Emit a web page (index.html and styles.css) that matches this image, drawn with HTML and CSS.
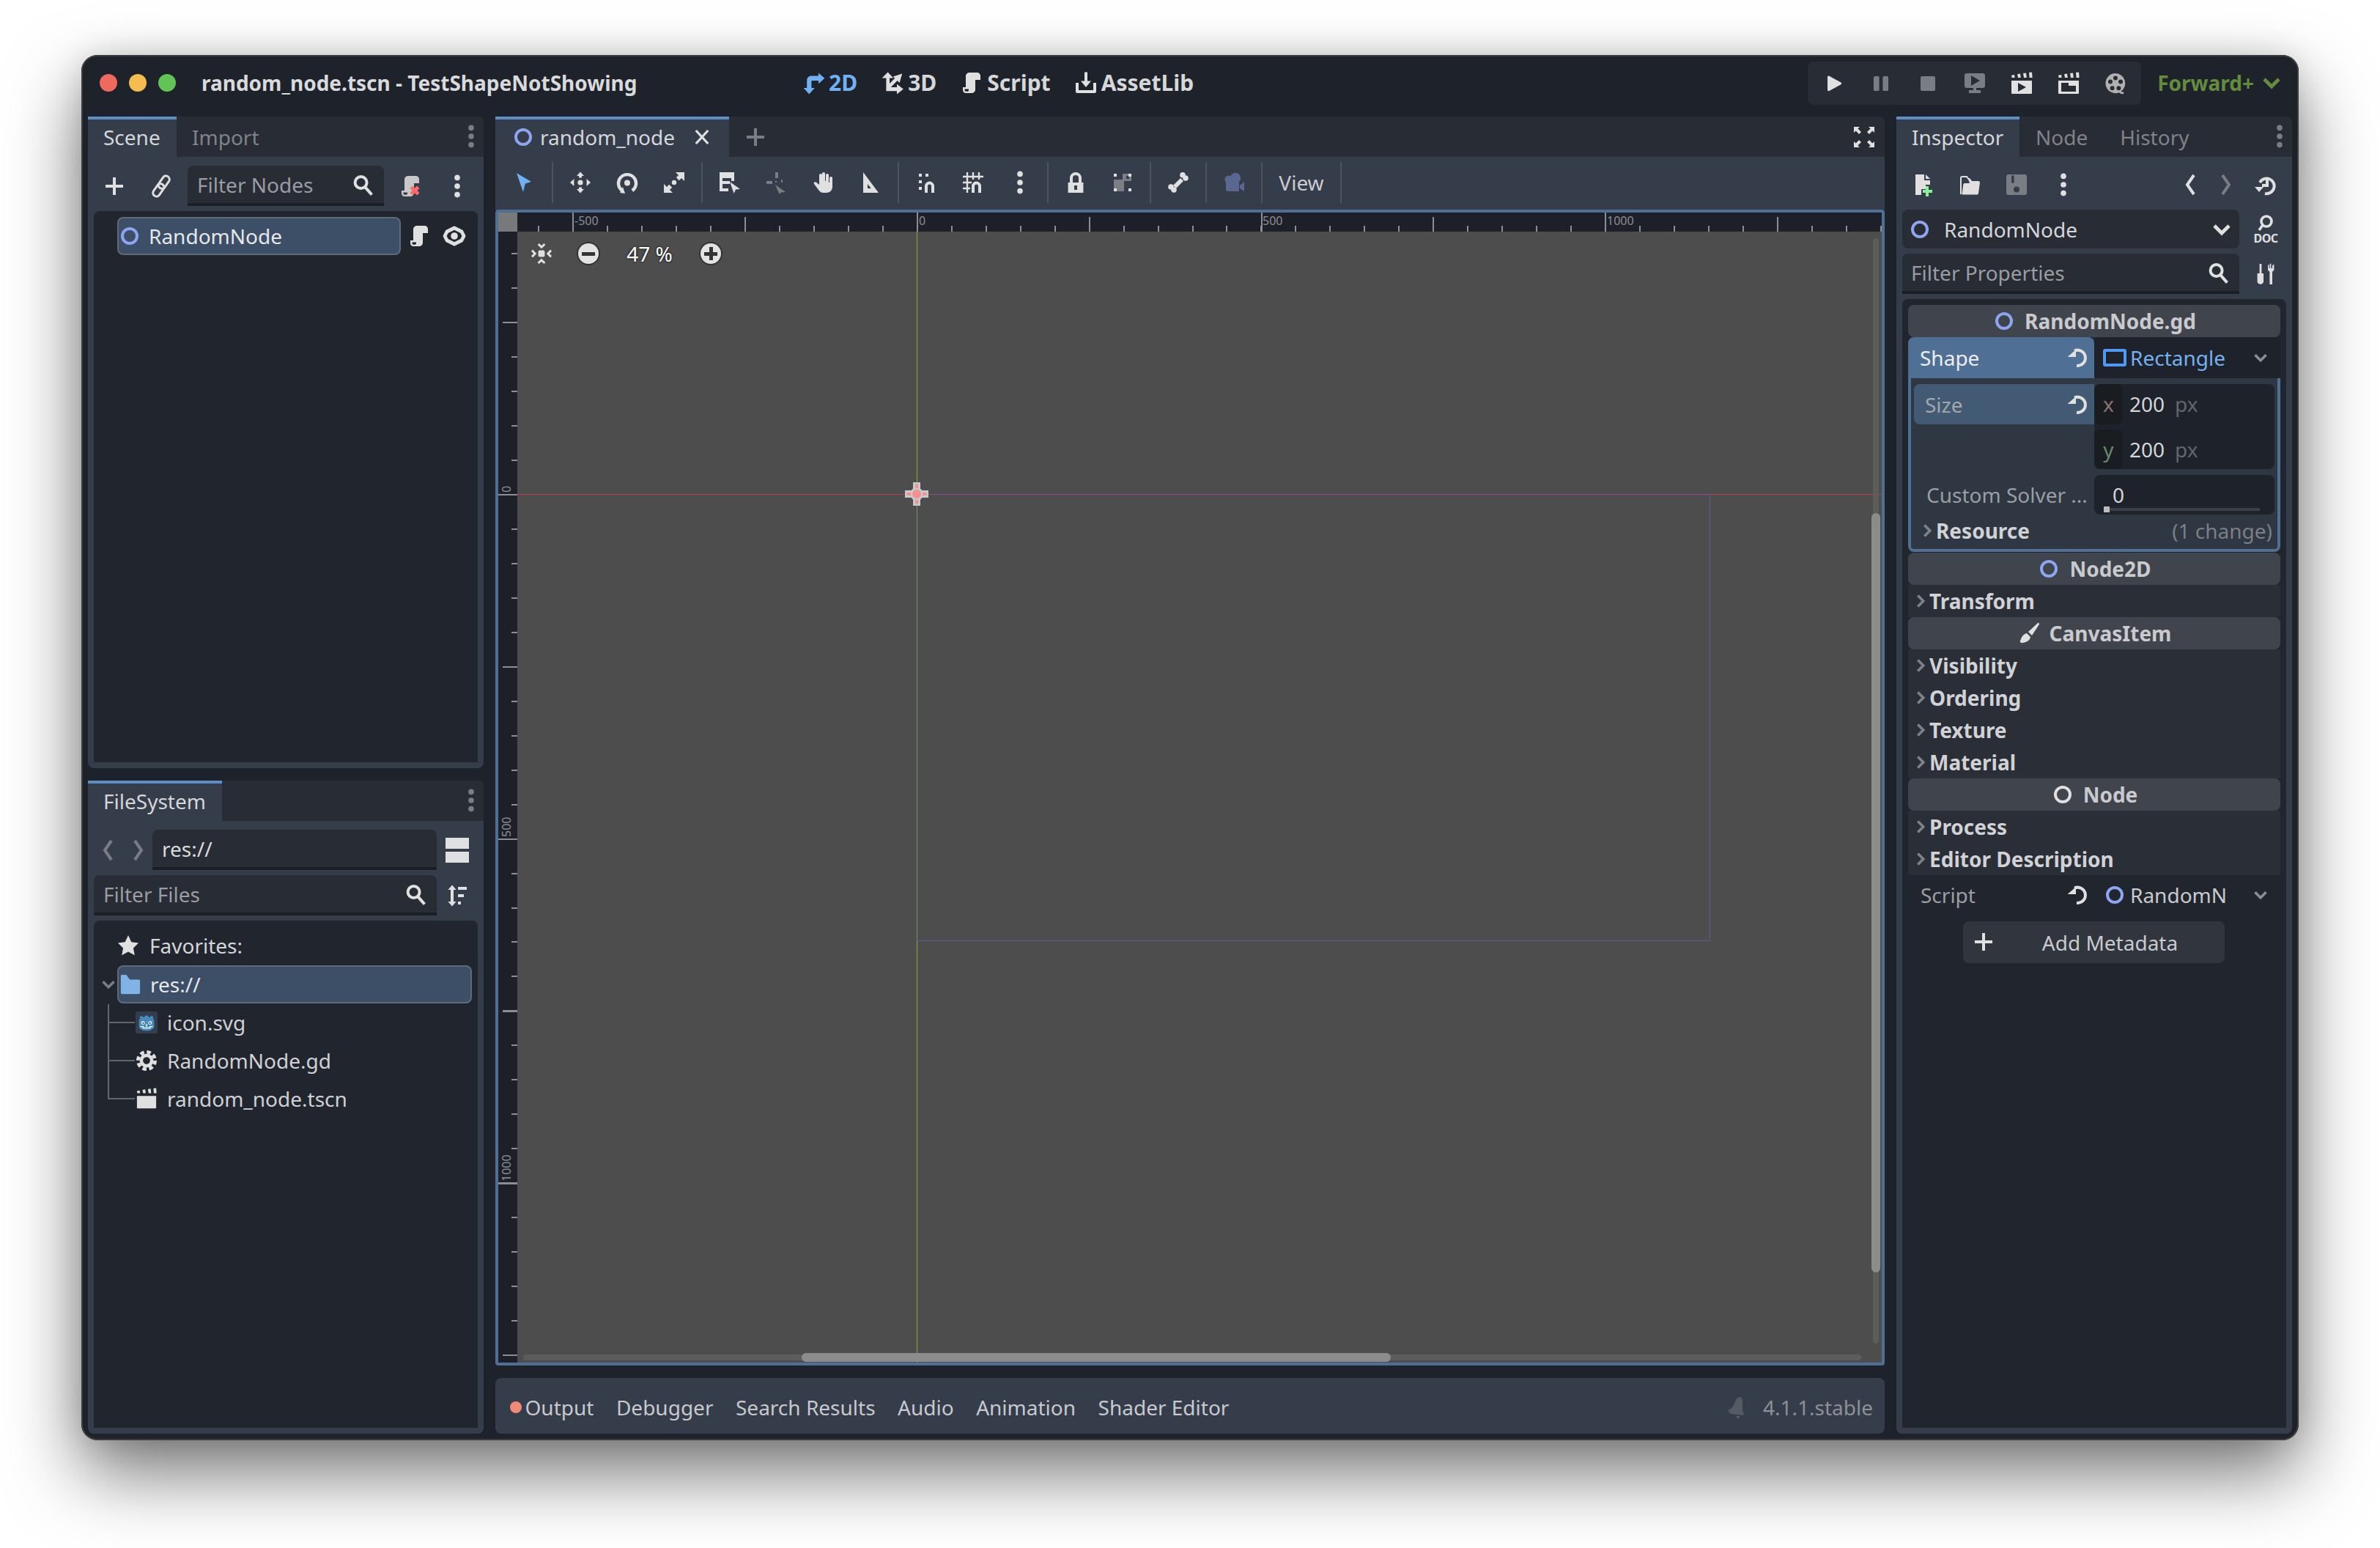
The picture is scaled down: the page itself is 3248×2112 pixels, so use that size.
FILE: index.html
```html
<!DOCTYPE html>
<html lang="en">
<head>
<meta charset="utf-8">
<title>random_node.tscn - TestShapeNotShowing</title>
<link rel="stylesheet" href="styles.css">
</head>
<body>
<svg class="defs" aria-hidden="true">
  <symbol id="i-plus" viewBox="0 0 16 16"><path fill="currentColor" d="M7 2h2v5h5v2H9v5H7V9H2V7h5z"/></symbol>
  <symbol id="i-ring" viewBox="0 0 16 16"><circle cx="8" cy="8" r="5" fill="none" stroke="currentColor" stroke-width="2"/></symbol>
  <symbol id="i-kebab" viewBox="0 0 16 16"><g fill="currentColor"><circle cx="8" cy="2.2" r="1.9"/><circle cx="8" cy="8" r="1.9"/><circle cx="8" cy="13.8" r="1.9"/></g></symbol>
  <symbol id="i-search" viewBox="0 0 16 16"><g fill="none" stroke="currentColor" stroke-width="2"><circle cx="6.8" cy="6.5" r="4"/><path d="M9.6 9.6l4.6 5.2"/></g></symbol>
  <symbol id="i-link" viewBox="0 0 16 16"><g transform="rotate(-55 8 8)" fill="none" stroke="currentColor" stroke-width="1.5"><rect x="0" y="5.6" width="9.5" height="4.8" rx="2.4"/><rect x="6.5" y="5.6" width="9.5" height="4.8" rx="2.4"/></g></symbol>
  <symbol id="i-script" viewBox="0 0 16 16"><path fill="currentColor" d="M6.5 1C5 1 4 2.2 4 3.5V11H2v2c0 1.1.9 2 2 2h4c1.5 0 2.5-1.1 2.5-2.5V6H14V3.2C14 2 13 1 11.8 1zM3.2 12.2H6V13c0 .5-.4.9-.9.9H4.200c-.6 0-1-.4-1-1z"/></symbol>
  <symbol id="i-eye" viewBox="0 0 16 16"><path fill="none" stroke="currentColor" stroke-width="2.400" d="M8 2.500L13 5 14.500 8 13 11 8 13.500 3 11 1.500 8 3 5z" stroke-linejoin="round"/><circle cx="8" cy="8" r="2.400" fill="currentColor"/></symbol>
  <symbol id="i-arrow" viewBox="0 0 16 16"><path fill="currentColor" d="M2.500 1.500l10 6-4.100 1.300L7 14.500z"/></symbol>
  <symbol id="i-move" viewBox="0 0 16 16"><g fill="currentColor"><circle cx="8" cy="8" r="1.800"/><path d="M8 0.800l2.500 2.700H9v1.300H7V3.500H5.500zM8 15.200l2.500-2.700H9v-1.300H7v1.300H5.500zM1 8l2.700-2.500V7h0v2h0v1.500zM15 8l-2.700-2.500V7h0v2h0v1.500z"/></g></symbol>
  <symbol id="i-rotate" viewBox="0 0 16 16"><path fill="none" stroke="currentColor" stroke-width="2.200" d="M4.600 13.500A6 6 0 1 1 11.400 13.500"/><circle cx="8" cy="8.300" r="2" fill="currentColor"/><path fill="currentColor" d="M3 15l3.500.5L5 11z"/></symbol>
  <symbol id="i-scale" viewBox="0 0 16 16"><g fill="currentColor"><path d="M9 1h6v6l-2-2-1.600 1.600L9.400 4.600 11 3z"/><path d="M7 15H1V9l2 2 1.600-1.600 2 2L5 13z"/><circle cx="8" cy="8" r="1.600"/></g></symbol>
  <symbol id="i-listsel" viewBox="0 0 16 16"><path fill="currentColor" d="M1 1h10v6H9V5H3v2h5v2H3v3h4v2H1zM3 3h6V3H3z"/><path fill="currentColor" d="M8 7.500l7 5-3 .3-1.200 2.700z"/></symbol>
  <symbol id="i-pivot" viewBox="0 0 16 16"><path fill="currentColor" d="M7 1h2v4H7zM1 7h4v2H1zM7 9.500l7 5-3 .3-1.200 1.200z"/><path fill="currentColor" d="M7 7h1v1H7zM11 6h1v2h-1z"/></symbol>
  <symbol id="i-hand" viewBox="0 0 16 16"><path fill="currentColor" d="M8 1c.6 0 1 .4 1 1v5h.5V3c0-.6.4-1 1-1s1 .4 1 1v5h.5V5c0-.6.4-1 1-1s1 .4 1 1v6c0 2.200-1.800 4-4 4H8c-1.500 0-2.500-.7-3.300-1.800L1.500 9c-.4-.6 0-1.400.8-1.400.4 0 .7.2 1 .5L5 9.500V3c0-.6.4-1 1-1s1 .4 1 1V2c0-.6.4-1 1-1z"/></symbol>
  <symbol id="i-ruler" viewBox="0 0 16 16"><path fill="currentColor" fill-rule="evenodd" d="M3 1l10.500 14H3zM6 9v3h2.400z"/></symbol>
  <symbol id="i-snap" viewBox="0 0 16 16"><path fill="currentColor" d="M3 2h2v2H3zM7.500 2h2v2h-2zM3 6.500h2v2H3zM3 11h2v2H3z"/><path fill="none" stroke="currentColor" stroke-width="2" d="M8 15v-4.500a2.200 2.200 0 0 1 4.500 0V15"/></symbol>
  <symbol id="i-grid" viewBox="0 0 16 16"><path fill="none" stroke="currentColor" stroke-width="1.200" d="M4 1v14M8 1v5M12 1v5M1 4h14M1 8h6M1 12h5"/><path fill="none" stroke="currentColor" stroke-width="2" d="M8 15v-4.500a2.200 2.200 0 0 1 4.500 0V15"/></symbol>
  <symbol id="i-lock" viewBox="0 0 16 16"><path fill="currentColor" fill-rule="evenodd" d="M8 1a4 4 0 0 0-4 4v3H2.800v7h10.400V8H12V5a4 4 0 0 0-4-4zm0 2a2 2 0 0 1 2 2v3H6V5a2 2 0 0 1 2-2zM7 10h2v3H7z"/></symbol>
  <symbol id="i-group" viewBox="0 0 16 16"><path fill="#7b7e85" d="M2 6h6V2h6v5H9v7H2z"/><path fill="#363d4a" d="M10.500 3.500h2v2h-2z"/><path fill="#e0e0e0" d="M2 2h2v2H2zM12 2h2v2h-2zM2 12h2v2H2zM12 12h2v2h-2z"/></symbol>
  <symbol id="i-bone" viewBox="0 0 16 16"><g fill="currentColor"><path d="M9.500 5l2 2-5 5-2-2z"/><circle cx="11" cy="2.900" r="1.900"/><circle cx="13" cy="5" r="1.900"/><circle cx="3" cy="11" r="1.900"/><circle cx="5" cy="13" r="1.900"/></g></symbol>
  <symbol id="i-camera" viewBox="0 0 16 16"><g fill="currentColor"><circle cx="4.500" cy="6" r="2.800"/><circle cx="9" cy="5" r="3.600"/><path d="M2.500 8h9v6h-8a1 1 0 0 1-1-1zM12 10l3-2.500V14l-3-2z"/></g></symbol>
  <symbol id="i-play" viewBox="0 0 16 16"><path fill="currentColor" d="M3.500 3.600c0-.6.7-1 1.200-.7l8 4.400c.5.300.5 1 0 1.300l-8 4.400c-.5.300-1.200-.1-1.200-.7z"/></symbol>
  <symbol id="i-pause" viewBox="0 0 16 16"><g fill="currentColor"><rect x="3" y="3" width="3.800" height="10" rx=".8"/><rect x="9.200" y="3" width="3.800" height="10" rx=".8"/></g></symbol>
  <symbol id="i-stop" viewBox="0 0 16 16"><rect x="3" y="3" width="10" height="10" rx="1" fill="currentColor"/></symbol>
  <symbol id="i-remote" viewBox="0 0 16 16"><path fill="currentColor" fill-rule="evenodd" d="M2.500 1h11A1.500 1.500 0 0 1 15 2.500v7a1.500 1.500 0 0 1-1.500 1.500H9v1.500h3V14.500H4V12.500h3V11H2.500A1.500 1.500 0 0 1 1 9.500v-7A1.500 1.500 0 0 1 2.500 1zM5.500 2.500v7l6-3.500z"/></symbol>
  <symbol id="i-clap" viewBox="0 0 16 16"><path fill="currentColor" d="M1 2.400l2 -.4.300 2H1.300zM5 1.600l2-.4.400 2.800H5.500zM9 1l2-.3.400 3.300H9.500zM13 .5l2-.3.300 3.800h-2z"/><path fill="currentColor" fill-rule="evenodd" d="M1 6h14v8.500a.5.500 0 0 1-.5.500h-13a.5.500 0 0 1-.5-.5z"/></symbol>
  <symbol id="i-clapplay" viewBox="0 0 16 16"><path fill="currentColor" d="M1 2.400l2-.4.300 2H1.300zM5 1.600l2-.4.400 2.800H5.500zM9 1l2-.3.400 3.300H9.500zM13 .5l2-.3.300 3.800h-2z"/><path fill="currentColor" fill-rule="evenodd" d="M1 6h14v8.500a.5.500 0 0 1-.5.500h-13a.5.500 0 0 1-.5-.5zM5.500 7.500v6l5.500-3z"/></symbol>
  <symbol id="i-clapfolder" viewBox="0 0 16 16"><path fill="currentColor" d="M1 2.400l2-.4.300 2H1.300zM5 1.600l2-.4.400 2.800H5.500zM9 1l2-.3.400 3.300H9.500zM13 .5l2-.3.300 3.800h-2z"/><path fill="currentColor" fill-rule="evenodd" d="M1 6h14v8.500a.5.500 0 0 1-.5.500h-13a.5.500 0 0 1-.5-.5zM3 7.500v6h10V9.500H8v-2z"/></symbol>
  <symbol id="i-film" viewBox="0 0 16 16"><path fill="currentColor" fill-rule="evenodd" d="M8 1a6.800 6.800 0 1 0 2.600 13.100c.6.700 1.400 1 2.400 1h.6v-1.300H13c-.5 0-.9-.1-1.200-.5A6.800 6.800 0 0 0 8 1zm0 1.800a1.500 1.500 0 1 1 0 3 1.500 1.500 0 0 1 0-3zM4.500 5.300a1.500 1.500 0 1 1 0 3 1.500 1.500 0 0 1 0-3zm7 0a1.500 1.500 0 1 1 0 3 1.500 1.500 0 0 1 0-3zM5.800 9.600a1.500 1.500 0 1 1 0 3 1.500 1.500 0 0 1 0-3zm4.400 0a1.500 1.500 0 1 1 0 3 1.500 1.500 0 0 1 0-3z"/></symbol>
  <symbol id="i-newres" viewBox="0 0 16 16"><path fill="currentColor" d="M3 1h6v4h4v3h-3v3H7v4H3z"/><path fill="currentColor" d="M10 1l3 3h-3z"/><path fill="#8eef97" d="M10 9h2v2.500h2.500v2H12V16h-2v-2.500H8v-2h2z"/></symbol>
  <symbol id="i-open" viewBox="0 0 16 16"><path fill="none" stroke="currentColor" stroke-width="1" d="M2 14.500V3.500c0-.6.400-1 1-1h3l1.500 2"/><path fill="currentColor" d="M3.800 14.800c-.7 0-1 0-1-.5l.8-6.300c.1-.6.500-1 1-1H8l-1-3 1-.5 1.500 2H14c.6 0 1 .5 1 1l-1 7.200c-.1.500-.4 1.100-1 1.100z"/></symbol>
  <symbol id="i-save" viewBox="0 0 16 16"><path fill="currentColor" fill-rule="evenodd" d="M2.500 1h11A1.500 1.500 0 0 1 15 2.500v11a1.500 1.500 0 0 1-1.500 1.500h-11A1.500 1.500 0 0 1 1 13.500v-11A1.500 1.500 0 0 1 2.500 1zM4.500 1.800v5h1.800v-5zM8 9.200a2 2 0 1 0 0 4 2 2 0 0 0 0-4z"/></symbol>
  <symbol id="i-back" viewBox="0 0 16 16"><path fill="none" stroke="currentColor" stroke-width="2" d="M10 1.500L5.500 8l4.500 6.500"/></symbol>
  <symbol id="i-fwd" viewBox="0 0 16 16"><path fill="none" stroke="currentColor" stroke-width="2" d="M6 1.500L10.500 8 6 14.500"/></symbol>
  <symbol id="i-hist" viewBox="0 0 16 16"><path fill="none" stroke="currentColor" stroke-width="2" d="M4 6.500A5.200 5.200 0 1 1 7.500 14M9 4.500V8.500H5.500"/><path fill="currentColor" d="M0.500 9.500h6l-3 3.500z"/></symbol>
  <symbol id="i-tools" viewBox="0 0 16 16"><path fill="currentColor" d="M3.800 1h1.400v6.500h1.300v6A2.500 2.500 0 0 1 4.500 15a2.500 2.500 0 0 1-2.200-1.500v-6h1.500zM9.500 1.300v3.200c0 1 .5 1.500 1.200 1.800V15h1.800V6.300c.8-.3 1.200-.9 1.200-1.800V1.300l-1.200.8V4h-.8V.9h-.9V4h-.5V2.100z"/></symbol>
  <symbol id="i-reset" viewBox="0 0 16 16"><path fill="none" stroke="currentColor" stroke-width="2" d="M5.500 3.300A5.300 5.300 0 1 1 7 13.400"/><path fill="currentColor" d="M.800 7.500h5.700V2.500z"/></symbol>
  <symbol id="i-chev" viewBox="0 0 16 16"><path fill="none" stroke="currentColor" stroke-width="2.400" d="M3 5.500l5 5 5-5"/></symbol>
  <symbol id="i-chevr" viewBox="0 0 16 16"><path fill="none" stroke="currentColor" stroke-width="2.400" d="M5.500 3l5 5-5 5"/></symbol>
  <symbol id="i-rect" viewBox="0 0 16 16"><rect x="1" y="3" width="14" height="10" rx=".5" fill="none" stroke="currentColor" stroke-width="2"/></symbol>
  <symbol id="i-star" viewBox="0 0 16 16"><path fill="currentColor" d="M8 .5l2.300 5 5.200.6-3.800 3.700 1 5.300L8 12.500l-4.700 2.600 1-5.300L.5 6.100l5.200-.6z"/></symbol>
  <symbol id="i-folder" viewBox="0 0 16 16"><path fill="currentColor" d="M1 2c0-.6.400-1 1-1h3l2.500 3.500H14c.6 0 1 .4 1 1V14c0 .6-.4 1-1 1H2c-.6 0-1-.4-1-1z"/></symbol>
  <symbol id="i-gear" viewBox="0 0 16 16"><circle cx="8" cy="8" r="6.200" fill="none" stroke="currentColor" stroke-width="2.600" stroke-dasharray="2.900 1.970"/><circle cx="8" cy="8" r="3.800" fill="none" stroke="currentColor" stroke-width="2.400"/></symbol>
  <symbol id="i-godot" viewBox="0 0 16 16"><rect width="16" height="16" rx="1.500" fill="#343e50"/><path fill="#478cbf" d="M4.500 3l1 1h1l.5-1h2l.5 1h1l1-1 1.500 1-.3 1.500.8.700V11c0 1.500-2.500 3-5.500 3S2.500 12.500 2.500 11V6.200l.8-.7L3 4z"/><circle cx="5.400" cy="8.300" r="1.300" fill="#fff"/><circle cx="10.600" cy="8.300" r="1.300" fill="#fff"/><circle cx="5.500" cy="8.400" r=".6" fill="#333"/><circle cx="10.500" cy="8.400" r=".6" fill="#333"/><path fill="none" stroke="#fff" stroke-width=".7" d="M3.500 11h2v1h5v-1h2M8 9v2"/></symbol>
  <symbol id="i-sort" viewBox="0 0 16 16"><path fill="currentColor" d="M5 .8L7.800 4H6v8h1.800L5 15.200 2.200 12H4V4H2.200zM9 2h6v2H9zM9 7h4v2H9zM9 12h2v2H9z"/></symbol>
  <symbol id="i-fs" viewBox="0 0 16 16"><path fill="currentColor" d="M1 1h4L3.700 2.300 6 4.500 4.500 6 2.300 3.700 1 5zM15 1v4l-1.300-1.300L11.500 6 10 4.500l2.300-2.200L11 1zM1 15v-4l1.300 1.300L4.500 10 6 11.500l-2.300 2.200L5 15zM15 15h-4l1.300-1.300L10 11.500l1.500-1.500 2.200 2.300L15 11z"/></symbol>
  <symbol id="i-2d" viewBox="0 0 16 16"><path fill="currentColor" d="M3.600 11.500V6.300C3.600 4.500 4.900 3.300 6.500 3.300h5V1.200l4.200 3.700-4.200 3.700V6.500H7.200c-.3 0-.5.2-.5.500v4.500h2.200L5.100 15.700 1.300 11.500z"/></symbol>
  <symbol id="i-3d" viewBox="0 0 16 16"><g fill="currentColor"><path d="M.8 4.800L4.800.8l3.800 4H6v3.700l3.600-3.600L8.400 3.700l6.200-2-1.800 6.300-1.500-1.500L6.900 11h4.100V8.900l4.400 3.400-4.400 3.500v-2.200H3.700V4.800z"/></g></symbol>
  <symbol id="i-asset" viewBox="0 0 16 16"><path fill="currentColor" d="M7 .8h2v6h2.500L8 11 4.500 6.800H7zM1 8h2v5h10V8h2v6c0 .6-.4 1-1 1H2c-.6 0-1-.4-1-1z"/></symbol>
  <symbol id="i-bell" viewBox="0 0 16 16"><path fill="currentColor" d="M9.500 1c1.500 0 2 1.500 2 3v6l1 3.500-9-1L1.500 10.500 5 7.500C6 6 7 1 9.500 1zM7 14h3l-1 1.500H8z"/></symbol>
  <symbol id="i-focus" viewBox="0 0 16 16"><g fill="currentColor"><rect x="5.800" y="5.800" width="4.400" height="4.400" rx="1"/></g><path fill="none" stroke="currentColor" stroke-width="1.500" d="M5.800 1.500L8 3.600l2.200-2.100M5.800 14.500L8 12.400l2.200 2.100M1.500 5.800L3.600 8l-2.100 2.200M14.500 5.800L12.400 8l2.100 2.200"/></symbol>
</svg>

<main class="window">
  <header class="titlebar">
    <div class="title-left">
      <span class="light red"></span><span class="light amber"></span><span class="light green"></span>
      <span class="title-text">random_node.tscn - TestShapeNotShowing</span>
    </div>
    <nav class="menu">
      <span class="menu-item active"><svg class="ic"><use href="#i-2d"/></svg>2D</span>
      <span class="menu-item"><svg class="ic"><use href="#i-3d"/></svg>3D</span>
      <span class="menu-item"><svg class="ic"><use href="#i-script"/></svg>Script</span>
      <span class="menu-item"><svg class="ic"><use href="#i-asset"/></svg>AssetLib</span>
    </nav>
    <div class="title-right">
      <div class="runbar">
        <span class="btn"><svg class="ic"><use href="#i-play"/></svg></span>
        <span class="btn dim"><svg class="ic"><use href="#i-pause"/></svg></span>
        <span class="btn dim"><svg class="ic"><use href="#i-stop"/></svg></span>
        <span class="btn dim"><svg class="ic"><use href="#i-remote"/></svg></span>
        <span class="btn"><svg class="ic"><use href="#i-clapplay"/></svg></span>
        <span class="btn"><svg class="ic"><use href="#i-clapfolder"/></svg></span>
        <span class="btn film"><svg class="ic"><use href="#i-film"/></svg></span>
      </div>
      <div class="renderer"><span>Forward+</span><svg class="ic"><use href="#i-chev"/></svg></div>
    </div>
  </header>

  <section class="left-col">
    <div class="dock scene-dock">
      <div class="tabs">
        <span class="tab active scene-tab">Scene</span>
        <span class="tab">Import</span>
        <svg class="ic kebab-tab"><use href="#i-kebab"/></svg>
      </div>
      <div class="dock-tools">
        <span class="btn"><svg class="ic"><use href="#i-plus"/></svg></span>
        <span class="btn"><svg class="ic"><use href="#i-link"/></svg></span>
        <div class="field filter-nodes"><span class="placeholder">Filter Nodes</span><svg class="ic"><use href="#i-search"/></svg></div>
        <span class="btn btn-after"><svg class="ic script-x"><use href="#i-script"/></svg><svg class="mini-x" viewBox="0 0 10 10"><path d="M2 2l6 6M8 2l-6 6"/></svg></span>
        <span class="btn"><svg class="ic"><use href="#i-kebab"/></svg></span>
      </div>
      <div class="tree scene-tree">
        <div class="scene-row">
          <div class="sel-row node-row"><svg class="ic node-ic"><use href="#i-ring"/></svg><span>RandomNode</span></div>
          <svg class="ic script-ic"><use href="#i-script"/></svg>
          <svg class="ic eye-ic"><use href="#i-eye"/></svg>
        </div>
      </div>
    </div>

    <div class="dock fs-dock">
      <div class="tabs">
        <span class="tab active fs-tab">FileSystem</span>
        <svg class="ic kebab-tab"><use href="#i-kebab"/></svg>
      </div>
      <div class="fs-tools">
        <div class="fs-line">
          <span class="btn nav dim"><svg class="ic"><use href="#i-back"/></svg></span>
          <span class="btn nav dim"><svg class="ic"><use href="#i-fwd"/></svg></span>
          <div class="field path-field"><span>res://</span></div>
          <span class="layout-btn"><i></i><i></i></span>
        </div>
        <div class="fs-line">
          <div class="field filter-files"><span class="placeholder">Filter Files</span><svg class="ic"><use href="#i-search"/></svg></div>
          <span class="side-btn"><svg class="ic"><use href="#i-sort"/></svg></span>
        </div>
      </div>
      <div class="tree fs-tree">
        <div class="fs-row fav"><svg class="ic"><use href="#i-star"/></svg><span>Favorites:</span></div>
        <div class="res-wrap">
          <svg class="ic tree-chev"><use href="#i-chev"/></svg>
          <div class="sel-row res-row"><svg class="ic folder-ic"><use href="#i-folder"/></svg><span>res://</span></div>
        </div>
        <div class="files">
          <div class="fs-row file"><svg class="ic"><use href="#i-godot"/></svg><span>icon.svg</span></div>
          <div class="fs-row file"><svg class="ic"><use href="#i-gear"/></svg><span>RandomNode.gd</span></div>
          <div class="fs-row file"><svg class="ic"><use href="#i-clap"/></svg><span>random_node.tscn</span></div>
        </div>
      </div>
    </div>
  </section>

  <section class="center-col">
    <div class="center-top">
      <div class="tabs center-tabs">
        <span class="tab active doc-tab"><svg class="ic node-ic"><use href="#i-ring"/></svg><span>random_node</span><svg class="close" viewBox="0 0 16 16"><path d="M2.500 2l11 12M13.500 2l-11 12"/></svg></span>
        <svg class="ic new-tab"><use href="#i-plus"/></svg>
        <svg class="ic fullscreen"><use href="#i-fs"/></svg>
      </div>
      <div class="canvas-toolbar">
        <span class="btn blue"><svg class="ic"><use href="#i-arrow"/></svg></span><i class="vsep"></i>
        <span class="btn"><svg class="ic"><use href="#i-move"/></svg></span>
        <span class="btn"><svg class="ic"><use href="#i-rotate"/></svg></span>
        <span class="btn"><svg class="ic"><use href="#i-scale"/></svg></span><i class="vsep"></i>
        <span class="btn"><svg class="ic"><use href="#i-listsel"/></svg></span>
        <span class="btn dim"><svg class="ic"><use href="#i-pivot"/></svg></span>
        <span class="btn"><svg class="ic"><use href="#i-hand"/></svg></span>
        <span class="btn"><svg class="ic"><use href="#i-ruler"/></svg></span><i class="vsep"></i>
        <span class="btn"><svg class="ic"><use href="#i-snap"/></svg></span>
        <span class="btn"><svg class="ic"><use href="#i-grid"/></svg></span>
        <span class="btn"><svg class="ic"><use href="#i-kebab"/></svg></span><i class="vsep"></i>
        <span class="btn"><svg class="ic"><use href="#i-lock"/></svg></span>
        <span class="btn"><svg class="ic"><use href="#i-group"/></svg></span><i class="vsep"></i>
        <span class="btn"><svg class="ic"><use href="#i-bone"/></svg></span><i class="vsep"></i>
        <span class="btn cam"><svg class="ic"><use href="#i-camera"/></svg></span><i class="vsep"></i>
        <span class="view-btn">View</span><i class="vsep"></i>
      </div>
    </div>

    <div class="viewport">
      <div class="corner"></div>
      <div class="hruler">
        <span class="hlabel l-m500">-500</span>
        <span class="hlabel l-0">0</span>
        <span class="hlabel l-500">500</span>
        <span class="hlabel l-1000">1000</span>
      </div>
      <div class="vruler">
        <span class="vlabel lv-0">0</span>
        <span class="vlabel lv-500">500</span>
        <span class="vlabel lv-1000">1000</span>
      </div>
      <div class="canvas">
        <div class="axis-x"></div>
        <div class="axis-y"></div>
        <div class="game-rect"></div>
        <svg class="origin" viewBox="0 0 32 32"><path fill="#c9c9c9" d="M11 0h10v8.500l2.500 2.500H32v10h-8.500L21 23.500V32H11v-8.500L8.500 21H0V11h8.500L11 8.500z"/><g fill="#f78f8f"><circle cx="16" cy="16" r="6"/><rect x="2.500" y="14" width="5.500" height="4"/><rect x="24" y="14" width="5.500" height="4"/><rect x="14" y="2.500" width="4" height="5.500"/><rect x="14" y="24" width="4" height="5.500"/></g></svg>
        <div class="zoom-bar">
          <svg class="ic"><use href="#i-focus"/></svg>
          <span class="zoom-btn minus"><i></i></span>
          <span class="zoom-val">47 %</span>
          <span class="zoom-btn plus"><i></i><i></i></span>
        </div>
        <div class="vscroll"><i></i></div>
        <div class="hscroll"><i></i></div>
      </div>
    </div>

    <footer class="bottom-bar">
      <span class="dot"></span><span class="bottom-first">Output</span>
      <span>Debugger</span><span>Search Results</span><span>Audio</span><span>Animation</span><span>Shader Editor</span>
      <span class="version"><svg class="ic"><use href="#i-bell"/></svg><span>4.1.1.stable</span></span>
    </footer>
  </section>

  <section class="dock inspector">
    <div class="tabs">
      <span class="tab active insp-tab">Inspector</span>
      <span class="tab t-node">Node</span>
      <span class="tab t-hist">History</span>
      <svg class="ic kebab-tab"><use href="#i-kebab"/></svg>
    </div>
    <div class="insp-tools">
      <span class="btn"><svg class="ic"><use href="#i-newres"/></svg></span>
      <span class="btn"><svg class="ic"><use href="#i-open"/></svg></span>
      <span class="btn dim"><svg class="ic"><use href="#i-save"/></svg></span>
      <span class="btn"><svg class="ic"><use href="#i-kebab"/></svg></span>
      <span class="btn nav2 push"><svg class="ic"><use href="#i-back"/></svg></span>
      <span class="btn nav2 dim"><svg class="ic"><use href="#i-fwd"/></svg></span>
      <span class="btn"><svg class="ic"><use href="#i-hist"/></svg></span>
    </div>
    <div class="insp-line">
      <div class="dropdown"><svg class="ic node-ic"><use href="#i-ring"/></svg><span>RandomNode</span><svg class="ic dd-chev"><use href="#i-chev"/></svg></div>
      <span class="doc-btn"><svg class="doc-ic" viewBox="0 0 32 26"><circle cx="17" cy="9" r="7" fill="none" stroke="#e0e0e0" stroke-width="3.600"/><path d="M12 14l-5 7" stroke="#e0e0e0" stroke-width="3.600"/></svg><b>DOC</b></span>
    </div>
    <div class="insp-line second">
      <div class="field filter-props"><span class="placeholder">Filter Properties</span><svg class="ic"><use href="#i-search"/></svg></div>
      <span class="doc-btn"><svg class="ic"><use href="#i-tools"/></svg></span>
    </div>
    <div class="props">
      <div class="head"><svg class="ic node-ic"><use href="#i-ring"/></svg><span>RandomNode.gd</span></div>

      <div class="shape-row">
        <div class="shape-label"><span>Shape</span><svg class="ic reset"><use href="#i-reset"/></svg></div>
        <div class="shape-val"><svg class="ic rect-ic"><use href="#i-rect"/></svg><span>Rectangle</span><svg class="ic val-chev"><use href="#i-chev"/></svg></div>
      </div>
      <div class="group">
        <div class="size-row">
          <div class="size-label"><span>Size</span><svg class="ic reset"><use href="#i-reset"/></svg></div>
          <div class="vec">
            <div class="vec-line"><span class="axis ax-x">x</span><span class="num">200</span><span class="unit">px</span></div>
            <div class="vec-line"><span class="axis ax-y">y</span><span class="num">200</span><span class="unit">px</span></div>
          </div>
        </div>
        <div class="solver-row">
          <span class="solver-label">Custom Solver ...</span>
          <div class="slider-box"><span>0</span><div class="track"><i></i></div></div>
        </div>
        <div class="res-sub"><svg class="ic sec-chev"><use href="#i-chevr"/></svg><b>Resource</b><span>(1 change)</span></div>
      </div>

      <div class="head node2d"><svg class="ic node-ic"><use href="#i-ring"/></svg><span>Node2D</span></div>
      <div class="sec"><svg class="ic sec-chev"><use href="#i-chevr"/></svg><b>Transform</b></div>
      <div class="head"><svg class="ic brush" viewBox="0 0 16 16"><path fill="currentColor" d="M14 1c.6-.3 1.200.3.9 1L10 9.500 7.500 7zM6.500 8l2.500 2.500c-.5 2.500-2.500 3.500-5 4-1.500.3-2.500-.5-2-1.500.8-1 .5-2 1.500-3 .8-1 1.700-1.800 3-2z"/></svg><span>CanvasItem</span></div>
      <div class="sec"><svg class="ic sec-chev"><use href="#i-chevr"/></svg><b>Visibility</b></div>
      <div class="sec"><svg class="ic sec-chev"><use href="#i-chevr"/></svg><b>Ordering</b></div>
      <div class="sec"><svg class="ic sec-chev"><use href="#i-chevr"/></svg><b>Texture</b></div>
      <div class="sec"><svg class="ic sec-chev"><use href="#i-chevr"/></svg><b>Material</b></div>
      <div class="head"><svg class="ic white-ring"><use href="#i-ring"/></svg><span>Node</span></div>
      <div class="sec"><svg class="ic sec-chev"><use href="#i-chevr"/></svg><b>Process</b></div>
      <div class="sec"><svg class="ic sec-chev"><use href="#i-chevr"/></svg><b>Editor Description</b></div>

      <div class="script-row">
        <span class="script-label">Script</span><svg class="ic reset"><use href="#i-reset"/></svg>
        <div class="script-val"><svg class="ic node-ic"><use href="#i-ring"/></svg><span>RandomN</span><svg class="ic val-chev"><use href="#i-chev"/></svg></div>
      </div>
      <div class="add-meta"><svg class="ic"><use href="#i-plus"/></svg><span>Add Metadata</span></div>
    </div>
  </section>
</main>
</body>
</html>
```
FILE: styles.css
```css
* { box-sizing: border-box; }
html, body { margin: 0; padding: 0; }
body {
  width: 3248px;
  height: 2112px;
  padding: 75px 0 0 111px;
  overflow: hidden;
  background: #fff;
  font-family: "Noto Sans", sans-serif;
  font-size: 28px;
  line-height: 38px;
  color: #d4d6d9;
}
.defs { position: absolute; width: 0; height: 0; }
.ic { width: 32px; height: 32px; flex: none; display: block; color: #e0e0e0; }

.window {
  width: 3026px;
  height: 1890px;
  display: grid;
  grid-template-columns: 540px 1896px 540px;
  grid-template-rows: 84px 1797px;
  column-gap: 16px;
  padding: 0 9px 9px;
  background: #1e222a;
  border-radius: 22px;
  box-shadow: inset 0 0 0 2px #3c3c3e, 0 44px 100px rgba(0,0,0,.55), 0 0 40px rgba(0,0,0,.12);
}

/* title bar */
.titlebar { grid-column: 1 / -1; display: grid; grid-template-columns: 974px 1fr auto; align-items: center; padding-bottom: 8px; }
.title-left { display: flex; align-items: center; padding-left: 16px; }
.light { width: 24px; height: 24px; border-radius: 50%; margin-right: 16px; }
.red { background: #ee6a5f; }
.amber { background: #f5bd4f; }
.green { background: #61c454; }
.title-text { margin-left: 19px; font-weight: 700; color: #d9dadc; }
.menu { display: flex; gap: 32px; }
.menu-item { display: flex; align-items: center; gap: 5px; font-size: 30px; font-weight: 700; color: #d6d7d9; }
.menu-item.active, .menu-item.active .ic { color: #72b0f5; }
.title-right { display: flex; align-items: center; }
.runbar { display: flex; height: 59px; align-items: center; padding: 0 3.5px; background: #282c35; border-radius: 8px; margin: 1px 22px 0 0; }
.renderer { display: flex; align-items: center; gap: 8px; padding-right: 12px; font-weight: 700; color: #648c3e; }
.renderer .ic { color: #648c3e; }

.btn { position: relative; width: 64px; height: 44px; display: flex; align-items: center; justify-content: center; flex: none; }
.btn.dim .ic { color: #7a7d83; }
.btn.blue .ic { color: #70b0f5; }
.btn.cam .ic { color: #5a6790; }
.btn.film .ic { color: #b0b0b0; }

/* docks */
.left-col { display: flex; flex-direction: column; gap: 17px; }
.dock { display: flex; flex-direction: column; background: #363d4a; border-radius: 8px; }
.scene-dock { height: 889px; }
.fs-dock { height: 891px; }
.tabs { display: flex; height: 55px; align-items: stretch; background: #282c35; border-radius: 8px 8px 0 0; flex: none; position: relative; }
.tab { display: flex; align-items: center; padding: 0 21px; color: #808389; }
.tab.active { background: #363d4a; border-top: 4px solid #5e8fc6; color: #d4d6d9; padding-bottom: 4px; }
.scene-tab { width: 121px; }
.fs-tab { width: 183px; }
.kebab-tab { margin: 11px 1px 0 auto; color: #7a7d83; }
.placeholder { color: #9a9da2; }

.dock-tools { display: flex; align-items: center; height: 74px; padding: 5px 0 0 4px; flex: none; }
.field { display: flex; align-items: center; height: 55px; background: #282c35; border-bottom: 4px solid #1b1e25; border-radius: 8px 8px 0 0; }
.filter-nodes { width: 268px; margin-left: 4px; padding: 0 13px; justify-content: space-between; }
.btn-after { margin-left: 4px; }
.script-x { color: #c8c8c8; }
.mini-x { position: absolute; width: 16px; height: 16px; left: 30px; top: 20px; fill: none; stroke: #ff6a6a; stroke-width: 3; }

.tree { flex: 1; margin: 0 8px 8px; background: #21262e; border-radius: 8px 8px 0 0; }
.scene-tree { padding: 8px 0 0 32px; }
.scene-row { display: flex; align-items: center; }
.sel-row { display: flex; align-items: center; height: 52px; background: #3c4f67; border: 2px solid #5d6a7b; border-radius: 8px; color: #e6e7e9; }
.node-ic { color: #8da5f3; }
.node-row { width: 387px; padding-left: 0; gap: 10px; }
.node-row .node-ic { margin-left: -1px; }
.script-ic { margin-left: 9px; }
.eye-ic { margin-left: 16px; }

.fs-tools { padding: 12px 8px 7px; display: flex; flex-direction: column; gap: 7px; flex: none; }
.fs-line { display: flex; align-items: center; }
.nav { width: 40px; }
.path-field { width: 388px; padding-left: 13px; color: #dadbdd; }
.layout-btn { display: flex; flex-direction: column; gap: 4px; margin-left: 12px; }
.layout-btn i { display: block; width: 32px; height: 15px; background: #e0e0e0; }
.filter-files { width: 468px; padding: 0 13px; justify-content: space-between; }
.side-btn { margin-left: 11px; }
.fs-tree { padding-top: 21px; }
.fs-row { display: flex; align-items: center; height: 52px; }
.fav { height: 26px; margin: 0 0 -12px; padding-left: 32px; gap: 14px; }
.fav .ic { width: 30px; height: 30px; }
.res-wrap { display: flex; align-items: center; margin-top: 26px; padding-left: 8px; }
.tree-chev { width: 24px; height: 24px; color: #7b7e84; }
.res-row { width: 484px; gap: 12px; padding-left: 1px; }
.folder-ic { color: #82b3e6; width: 30px; height: 30px; }
.files { position: relative; margin-left: 19px; padding-left: 38px; height: 156px; }
.files::before { content: ""; position: absolute; left: 0; top: 1px; width: 2px; height: 129px; background: #62656b; }
.file { gap: 13px; position: relative; height: 52px; color: #cfd1d4; }
.file::before { content: ""; position: absolute; left: -38px; top: 25px; width: 37px; height: 2px; background: #62656b; }
.file .ic { width: 30px; height: 30px; }

/* center */
.center-col { display: flex; flex-direction: column; }
.center-top { flex: none; background: #363d4a; border-radius: 8px 8px 0 0; }
.doc-tab { width: 319px; padding: 0 0 4px 27px; gap: 5px; }
.doc-tab .ic { margin-left: -5px; margin-right: 2px; }
.close { width: 24px; height: 24px; margin-left: 20px; fill: none; stroke: #e0e0e0; stroke-width: 2.2; }
.new-tab { align-self: center; margin-left: 20px; width: 32px; height: 32px; color: #7a7d83; }
.fullscreen { align-self: center; margin-left: auto; margin-right: 12px; }
.canvas-toolbar { display: flex; align-items: center; height: 72px; padding: 0 0 2px 8px; }
.canvas-toolbar .btn { height: 44px; }
.vsep { display: block; width: 2px; height: 56px; margin: 0 5px; background: #4c5361; flex: none; }
.view-btn { width: 96px; text-align: center; color: #c9cbcf; flex: none; }

.viewport {
  height: 1577px;
  display: grid;
  grid-template-columns: 26px 1fr;
  grid-template-rows: 26px 1fr;
  border: 4px solid #4f6f94;
  border-radius: 4px;
  background: #1e222a;
  overflow: hidden;
}
.corner { background: #78797b; }
.hruler, .vruler { position: relative; background-color: #1d2028; overflow: hidden; }
.hruler {
  background-image:
    repeating-linear-gradient(90deg, transparent 0, transparent 28px, #8b8e93 28px, #8b8e93 30px, transparent 30px, transparent 46.975px),
    repeating-linear-gradient(90deg, transparent 0, transparent 75px, #8b8e93 75px, #8b8e93 77px, transparent 77px, transparent 234.875px),
    repeating-linear-gradient(90deg, transparent 0, transparent 75px, #8b8e93 75px, #8b8e93 77px, transparent 77px, transparent 469.75px);
  background-size: 100% 8px, 100% 20px, 100% 26px;
  background-position: 0 100%, 0 100%, 0 100%;
  background-repeat: no-repeat;
}
.vruler {
  background-image:
    repeating-linear-gradient(180deg, transparent 0, transparent 29px, #8b8e93 29px, #8b8e93 31px, transparent 31px, transparent 46.975px),
    repeating-linear-gradient(180deg, transparent 0, transparent 123px, #8b8e93 123px, #8b8e93 125px, transparent 125px, transparent 234.875px),
    repeating-linear-gradient(180deg, transparent 0, transparent 358px, #8b8e93 358px, #8b8e93 360px, transparent 360px, transparent 469.75px);
  background-size: 8px 100%, 20px 100%, 26px 100%;
  background-position: 100% 0, 100% 0, 100% 0;
  background-repeat: no-repeat;
}
.hlabel { position: absolute; top: 0; font-size: 16px; line-height: 22px; color: #8b8e93; }
.l-m500 { left: 78px; }
.l-0 { left: 548px; }
.l-500 { left: 1017px; }
.l-1000 { left: 1487px; }
.vlabel { position: absolute; left: 0; font-size: 16px; line-height: 22px; color: #8b8e93; transform-origin: 0 100%; transform: rotate(-90deg); white-space: nowrap; }
.lv-0 { top: 334px; left: 22px; }
.lv-500 { top: 804px; left: 22px; }
.lv-1000 { top: 1274px; left: 22px; }

.canvas { position: relative; background: #4d4d4d; overflow: hidden; }
.axis-x { position: absolute; left: 0; right: 0; top: 358px; height: 1px; background: #b2414c; }
.axis-y { position: absolute; left: 545px; top: 0; bottom: 0; width: 1px; background: #8aa83a; }
.game-rect { position: absolute; left: 545px; top: 358px; width: 1083px; height: 610px; border: 1px solid #5a5a96; border-top-color: #94489a; border-left-color: #74916f; }
.origin { position: absolute; left: 529px; top: 342px; width: 32px; height: 32px; }
.zoom-bar { position: absolute; left: 17px; top: 11px; display: flex; align-items: center; }
.zoom-btn { position: relative; width: 28px; height: 28px; border-radius: 50%; background: #e3e3e3; box-shadow: 0 0 0 2px #333; flex: none; }
.minus { margin-left: 34px; }
.zoom-btn i { position: absolute; left: 5px; top: 11.500px; width: 18px; height: 5px; background: #333; }
.plus i + i { left: 11.500px; top: 5px; width: 5px; height: 18px; }
.zoom-val { width: 139px; text-align: center; color: #fff; text-shadow: 0 0 3px #000; white-space: nowrap; }
.vscroll { position: absolute; left: 1850px; top: 9px; width: 8px; height: 1508px; border-radius: 4px; background: #5c5c5c; }
.vscroll i { position: absolute; left: -2px; top: 375px; width: 12px; height: 1036px; border-radius: 6px; background: #8c8c8c; }
.hscroll { position: absolute; left: 8px; top: 1532px; width: 1826px; height: 8px; border-radius: 4px; background: #5c5c5c; }
.hscroll i { position: absolute; left: 380px; top: -2px; width: 804px; height: 12px; border-radius: 6px; background: #8c8c8c; }

.bottom-bar { display: flex; align-items: center; height: 76px; margin-top: 17px; padding: 4px 16px 0 20px; background: #363d4a; border-radius: 8px; gap: 30.500px; color: #c7c9cd; }
.dot { width: 16px; height: 16px; border-radius: 50%; background: #f08a78; margin-right: -26px; flex: none; }
.version { margin-left: auto; display: flex; align-items: center; gap: 19px; color: #8d9096; }
.version .ic { color: #565a63; }

/* inspector */
.inspector { height: 1797px; }
.insp-tab { width: 168px; }
.t-node { padding: 0 0 0 22px; }
.t-hist { padding: 0 0 0 44px; }
.insp-tools { display: flex; align-items: center; height: 72px; padding: 4px 4px 0; flex: none; }
.push { margin-left: auto; }
.nav2 { width: 47px; }
.insp-line { display: flex; align-items: center; padding-left: 8px; flex: none; }
.insp-line.second { margin-top: 7px; }
.dropdown { display: flex; align-items: center; width: 460px; height: 53px; background: #282c35; border-radius: 8px; padding-left: 8px; color: #d4d6d9; }
.dropdown span { margin-left: 17px; }
.dd-chev { margin-left: auto; margin-right: 8px; }
.doc-btn { position: relative; width: 64px; margin-left: 4px; height: 53px; display: flex; flex-direction: column; align-items: center; justify-content: center; }
.doc-ic { width: 32px; height: 26px; flex: none; display: block; margin-bottom: -2px; }
.doc-btn b { font-size: 16px; line-height: 16px; letter-spacing: -.5px; color: #e0e0e0; font-weight: 700; }
.filter-props { width: 460px; padding: 0 13px 0 12px; justify-content: space-between; }
.props { flex: 1; margin: 7px 8px 8px; padding: 8px 8px 0; background: #21262e; border-radius: 8px 8px 0 0; }
.head { display: flex; align-items: center; justify-content: center; height: 44px; gap: 12px; background: #40444d; border-radius: 8px; font-weight: 700; color: #c8cacd; }
.brush { width: 32px; height: 32px; }
.white-ring { color: #e0e0e0; }
.node2d { margin-top: 1px; }
.sec { display: flex; align-items: center; height: 44px; background: #2a2e36; padding-left: 9px; color: #d0d2d5; }
.sec b, .res-sub b { font-weight: 700; }
.sec-chev { width: 24px; height: 24px; color: #7f8288; margin: 0 0 0 -4px; }

.shape-row { display: flex; height: 56px; }
.shape-label { width: 254px; display: flex; align-items: center; justify-content: space-between; padding: 0 6px 0 16px; background: #4f6f94; border-radius: 8px 8px 0 0; color: #ecedef; }
.shape-val { flex: 1; display: flex; align-items: center; background: #1e222a; border-radius: 8px; padding-left: 12px; color: #76b0f0; }
.rect-ic { color: #5199f8; }
.shape-val span { margin-left: 5px; }
.val-chev { margin-left: auto; margin-right: 15px; width: 24px; height: 24px; color: #8c8e92; }
.group { height: 237px; background: #2e3742; border: 4px solid #4f6f94; border-top: 0; border-radius: 0 0 8px 8px; padding: 8px 4px 0; }
.size-row { display: flex; height: 116px; }
.size-label { width: 246px; height: 55px; display: flex; align-items: center; justify-content: space-between; padding: 0 6px 0 15px; background: #435a75; border-radius: 8px 0 0 8px; color: #a3a6aa; }
.vec { flex: 1; display: flex; flex-direction: column; gap: 7px; background: #1e222a; border-radius: 8px; }
.vec-line { display: flex; align-items: center; height: 55px; }
.axis { width: 39px; height: 100%; display: flex; align-items: center; justify-content: center; background: #191c20; border-radius: 8px; }
.ax-x { color: #8f7468; }
.ax-y { color: #66896c; }
.num { margin-left: 9px; color: #d4d6d9; }
.unit { margin-left: 14px; color: #62656a; }
.solver-row { display: flex; margin-top: 8px; height: 54px; }
.solver-label { width: 246px; padding-left: 17px; line-height: 54px; color: #9b9ea2; white-space: nowrap; }
.slider-box { position: relative; flex: 1; background: #1e222a; border-radius: 8px; padding-left: 25px; line-height: 54px; color: #d4d6d9; }
.track { position: absolute; left: 13px; right: 20px; top: 45px; height: 4px; background: #3c3f45; }
.track i { position: absolute; left: 0; top: -2px; width: 8px; height: 8px; background: #bdbdbd; }
.res-sub { display: flex; align-items: center; height: 44px; padding-left: 10px; color: #d0d2d5; }
.res-sub span { margin-left: auto; margin-right: 3px; color: #7b7f86; }

.script-row { display: flex; align-items: center; height: 54px; padding-left: 17px; color: #9b9ea2; }
.script-label { width: 199px; }
.script-val { flex: 1; display: flex; align-items: center; padding-left: 18px; color: #c8cacd; }
.script-val span { margin-left: 5px; }
.add-meta { position: relative; display: flex; align-items: center; justify-content: center; width: 357px; height: 57px; margin: 9px 0 0 75px; background: #30353e; border-radius: 8px; color: #c8cacd; }
.add-meta .ic { position: absolute; left: 12px; top: 12px; }
.add-meta span { margin-left: 44px; }
```
